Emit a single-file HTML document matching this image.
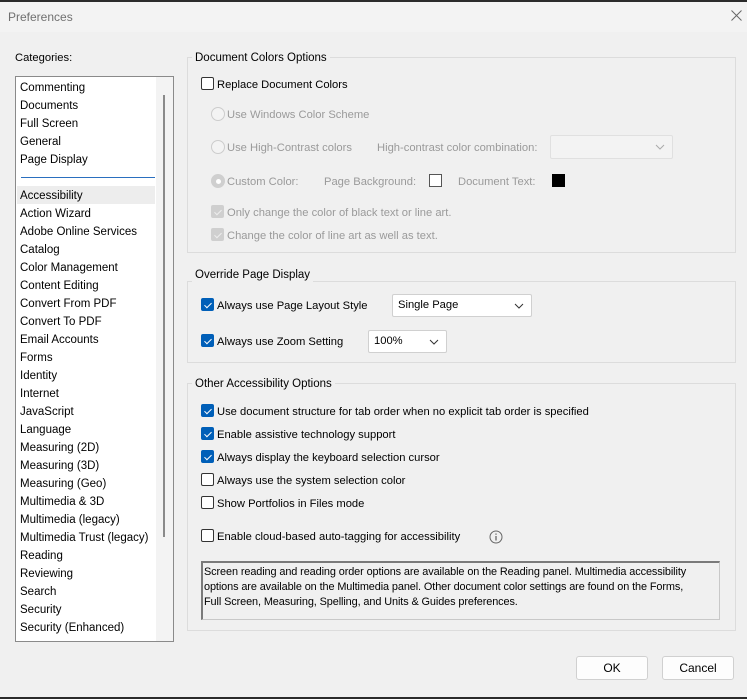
<!DOCTYPE html>
<html><head><meta charset="utf-8"><style>
*{box-sizing:border-box;margin:0;padding:0}
body{width:747px;height:699px;background:#f0f0f0;font-family:"Segoe UI","Liberation Sans",sans-serif;font-size:12px;color:#000;position:relative;overflow:hidden}
.a{position:absolute;white-space:nowrap}
#top{position:absolute;left:0;top:0;width:747px;height:2px;background:#2b2b2b}
#bot{position:absolute;left:0;top:697px;width:747px;height:2px;background:#2b2b2b}
#title{position:absolute;left:0;top:2px;width:747px;height:30px;background:#f3f3f3}
.list{position:absolute;left:15px;top:76px;width:159px;height:566px;background:#fff;border:1px solid #8a8a8a}
.li{position:absolute;left:4px;height:18px;line-height:18px;font-size:11.5px}
.grp{position:absolute;border:1px solid #dcdcdc}
.gl{position:absolute;background:#f0f0f0;padding:0 3px;font-size:11.5px;line-height:14px}
.cb{position:absolute;width:13px;height:13px;border:1px solid #333;border-radius:2px;background:#fff}
.cb.on{background:#005fb8;border-color:#005fb8}
.cb.on::after{content:"";position:absolute;left:3.5px;top:1.5px;width:3px;height:6px;border:solid #fff;border-width:0 1.3px 1.3px 0;transform:rotate(45deg)}
.cb.dis{background:#cfcfcf;border-color:#cfcfcf}
.cb.dis::after{content:"";position:absolute;left:3.5px;top:1.5px;width:3px;height:6px;border:solid #eee;border-width:0 1.3px 1.3px 0;transform:rotate(45deg)}
.rd{position:absolute;width:14px;height:14px;border:1px solid #ccc;border-radius:50%;background:#f3f3f3}
.rd.sel{background:#cfcfcf;border-color:#cfcfcf}
.rd.sel::after{content:"";position:absolute;left:3.5px;top:3.5px;width:5px;height:5px;border-radius:50%;background:#fff}
.t{font-size:11.2px;line-height:14px;margin-top:1px}
.g{color:#9a9a9a}
.dd{position:absolute;background:#fff;border:1px solid #d0d0d0;border-radius:2px;font-size:11.2px;line-height:21px;padding-left:5px}
.dd svg{position:absolute;right:7px;top:8px}
.btn{position:absolute;top:656px;width:72px;height:24px;background:#fdfdfd;border:1px solid #d0d0d0;border-radius:3px;text-align:center;line-height:22px;font-size:12px}
</style></head><body>
<div id="top"></div><div id="title"></div>
<div class="a" style="left:8px;top:10px;color:#707070;font-size:12px">Preferences</div>
<svg class="a" style="left:731px;top:10px" width="11" height="11"><path d="M0.5 0.5L10.5 10.5M10.5 0.5L0.5 10.5" stroke="#666" stroke-width="1"/></svg>
<div class="a t" style="left:15px;top:50px">Categories:</div>
<div class="list">
<div style="position:absolute;left:140px;top:0;width:17px;height:564px;background:#f3f3f3"></div>
<div style="position:absolute;left:147px;top:18px;width:2px;height:442px;background:#8a8a8a"></div>
<div style="position:absolute;left:1px;top:109px;width:138px;height:18px;background:#ededed"></div>
<div style="position:absolute;left:5px;top:100px;width:134px;height:1px;background:#2a6fbf"></div>
<div class="li" style="top:2px">Commenting</div>
<div class="li" style="top:20px">Documents</div>
<div class="li" style="top:38px">Full Screen</div>
<div class="li" style="top:56px">General</div>
<div class="li" style="top:74px">Page Display</div>
<div class="li" style="top:110px">Accessibility</div>
<div class="li" style="top:128px">Action Wizard</div>
<div class="li" style="top:146px">Adobe Online Services</div>
<div class="li" style="top:164px">Catalog</div>
<div class="li" style="top:182px">Color Management</div>
<div class="li" style="top:200px">Content Editing</div>
<div class="li" style="top:218px">Convert From PDF</div>
<div class="li" style="top:236px">Convert To PDF</div>
<div class="li" style="top:254px">Email Accounts</div>
<div class="li" style="top:272px">Forms</div>
<div class="li" style="top:290px">Identity</div>
<div class="li" style="top:308px">Internet</div>
<div class="li" style="top:326px">JavaScript</div>
<div class="li" style="top:344px">Language</div>
<div class="li" style="top:362px">Measuring (2D)</div>
<div class="li" style="top:380px">Measuring (3D)</div>
<div class="li" style="top:398px">Measuring (Geo)</div>
<div class="li" style="top:416px">Multimedia &amp; 3D</div>
<div class="li" style="top:434px">Multimedia (legacy)</div>
<div class="li" style="top:452px">Multimedia Trust (legacy)</div>
<div class="li" style="top:470px">Reading</div>
<div class="li" style="top:488px">Reviewing</div>
<div class="li" style="top:506px">Search</div>
<div class="li" style="top:524px">Security</div>
<div class="li" style="top:542px">Security (Enhanced)</div>
</div>

<div class="grp" style="left:187px;top:57px;width:549px;height:196px"></div>
<div class="gl" style="left:192px;top:51px">Document Colors Options</div>
<div class="cb" style="left:201px;top:77px"></div><div class="a t" style="left:217px;top:77px">Replace Document Colors</div>
<div class="rd" style="left:211px;top:107px"></div><div class="a t g" style="left:227px;top:107px">Use Windows Color Scheme</div>
<div class="rd" style="left:211px;top:140px"></div><div class="a t g" style="left:227px;top:140px">Use High-Contrast colors</div>
<div class="a t g" style="left:377px;top:140px">High-contrast color combination:</div>
<div class="dd" style="left:550px;top:135px;width:123px;height:24px;background:#f3f3f3;border-color:#e0e0e0"><svg width="10" height="6"><path d="M1 1L5 5L9 1" stroke="#aaa" fill="none"/></svg></div>
<div class="rd sel" style="left:211px;top:174px"></div><div class="a t g" style="left:227px;top:174px">Custom Color:</div>
<div class="a t g" style="left:324px;top:174px">Page Background:</div>
<div class="a" style="left:429px;top:174px;width:13px;height:13px;border:1px solid #555;background:#fff"></div>
<div class="a t g" style="left:458px;top:174px">Document Text:</div>
<div class="a" style="left:552px;top:174px;width:13px;height:13px;background:#000"></div>
<div class="cb dis" style="left:211px;top:205px"></div><div class="a t g" style="left:227px;top:205px">Only change the color of black text or line art.</div>
<div class="cb dis" style="left:211px;top:228px"></div><div class="a t g" style="left:227px;top:228px">Change the color of line art as well as text.</div>

<div class="grp" style="left:187px;top:281px;width:549px;height:82px"></div>
<div class="gl" style="left:192px;top:268px">Override Page Display</div>
<div class="cb on" style="left:201px;top:298px"></div><div class="a t" style="left:217px;top:298px">Always use Page Layout Style</div>
<div class="dd" style="left:392px;top:294px;width:140px;height:23px">Single Page<svg width="10" height="6"><path d="M1 1L5 5L9 1" stroke="#333" fill="none"/></svg></div>
<div class="cb on" style="left:201px;top:334px"></div><div class="a t" style="left:217px;top:334px">Always use Zoom Setting</div>
<div class="dd" style="left:368px;top:330px;width:79px;height:23px">100%<svg width="10" height="6"><path d="M1 1L5 5L9 1" stroke="#333" fill="none"/></svg></div>

<div class="grp" style="left:187px;top:383px;width:549px;height:248px"></div>
<div class="gl" style="left:192px;top:377px">Other Accessibility Options</div>
<div class="cb on" style="left:201px;top:404px"></div><div class="a t" style="left:217px;top:404px">Use document structure for tab order when no explicit tab order is specified</div>
<div class="cb on" style="left:201px;top:427px"></div><div class="a t" style="left:217px;top:427px">Enable assistive technology support</div>
<div class="cb on" style="left:201px;top:450px"></div><div class="a t" style="left:217px;top:450px">Always display the keyboard selection cursor</div>
<div class="cb" style="left:201px;top:473px"></div><div class="a t" style="left:217px;top:473px">Always use the system selection color</div>
<div class="cb" style="left:201px;top:496px"></div><div class="a t" style="left:217px;top:496px">Show Portfolios in Files mode</div>
<div class="cb" style="left:201px;top:529px"></div><div class="a t" style="left:217px;top:529px">Enable cloud-based auto-tagging for accessibility</div>
<svg class="a" style="left:489px;top:530px" width="14" height="14"><circle cx="7" cy="7" r="6" stroke="#666" fill="none"/><path d="M7 6V10.5M7 3.5V4.8" stroke="#666" stroke-width="1.3"/></svg>
<div class="a" style="left:201px;top:561px;width:519px;height:59px;border:1px solid #c8c8c8;border-top:2px solid #7a7a7a;border-left:2px solid #7a7a7a;padding:2px 1px;font-size:10.9px;line-height:15px;letter-spacing:-0.1px">Screen reading and reading order options are available on the Reading panel. Multimedia accessibility<br>options are available on the Multimedia panel. Other document color settings are found on the Forms,<br>Full Screen, Measuring, Spelling, and Units &amp; Guides preferences.</div>

<div class="btn" style="left:576px">OK</div>
<div class="btn" style="left:662px">Cancel</div>
<div id="bot"></div>
</body></html>
